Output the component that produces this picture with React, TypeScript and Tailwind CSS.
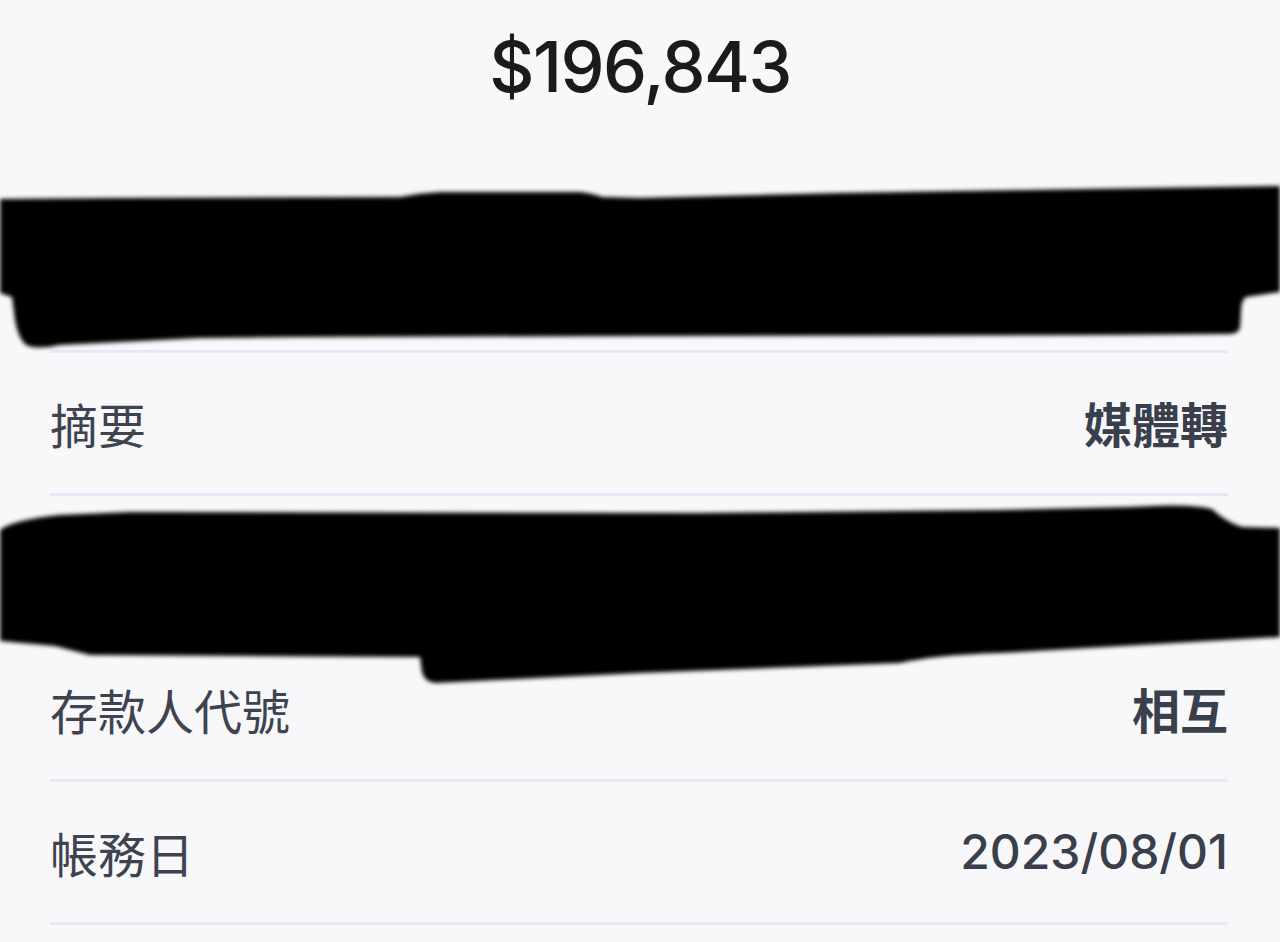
import type { ReactNode } from 'react';

const cjk = "font-['Noto_Sans_CJK_TC','Noto_Sans_CJK_SC',sans-serif]";
const latin = "font-['Inter','Noto_Sans_CJK_TC',sans-serif]";

interface DetailRowProps {
  label?: string;
  children?: ReactNode;
}

function DetailRow({ label, children }: DetailRowProps) {
  return (
    <div className="flex h-[143px] items-center justify-between border-b-[3px] border-[#e4e9f6]">
      <span className={`${cjk} text-[48px] leading-none text-[#3e4350]`}>{label}</span>
      <span className="text-[#3a3f4c]">{children}</span>
    </div>
  );
}

function Redactions() {
  return (
    <svg
      className="pointer-events-none absolute left-0 top-0 h-[942px] w-[1280px]"
      viewBox="0 0 1280 942"
      aria-hidden
    >
      <defs>
        <filter id="soft" x="-5%" y="-20%" width="110%" height="140%">
          <feGaussianBlur stdDeviation="2" />
        </filter>
      </defs>
      <g filter="url(#soft)" fill="#000">
        <path d="M0,199 L120,198 L400,197 Q420,193 440,192 L580,192 Q595,194 602,197 L640,198 L840,193 L1280,186 L1280,292 L1246,297 Q1241,300 1241,312 L1240,328 Q1238,334 1228,334 L1100,335 L640,336 L300,337 L200,338 L60,345 Q36,350 26,345 Q18,338 15,320 L12,297 L0,293 Z" />
        <path d="M0,530 Q12,520 60,515 L130,512 L700,513 L1000,510 L1130,507 Q1190,503 1212,509 Q1226,522 1242,527 L1280,528 L1280,637 L1000,653 Q935,655 900,663 L640,673 L436,683 Q424,682 422,672 L420,657 L90,655 Q70,650 55,646 L0,641 Z" />
      </g>
    </svg>
  );
}

export default function App() {
  return (
    <div className="relative min-h-[942px] w-full overflow-hidden bg-[#f8f8fa]">
      <div className="flex h-[210px] justify-center pt-[32px]">
        <span className={`${latin} text-[70px] font-medium leading-none tracking-[-1.5px] text-[#1b1b1d]`}>
          $196,843
        </span>
      </div>

      <div className="ml-[50px] mr-[52px] flex flex-col">
        <DetailRow />
        <DetailRow label="摘要">
          <span className={`${cjk} text-[48px] font-bold leading-none`}>媒體轉</span>
        </DetailRow>
        <DetailRow />
        <DetailRow label="存款人代號">
          <span className={`${cjk} text-[48px] font-bold leading-none`}>相互</span>
        </DetailRow>
        <DetailRow label="帳務日">
          <span className={`${latin} text-[48px] font-medium leading-none`}>2023/08/01</span>
        </DetailRow>
      </div>

      <Redactions />
    </div>
  );
}
